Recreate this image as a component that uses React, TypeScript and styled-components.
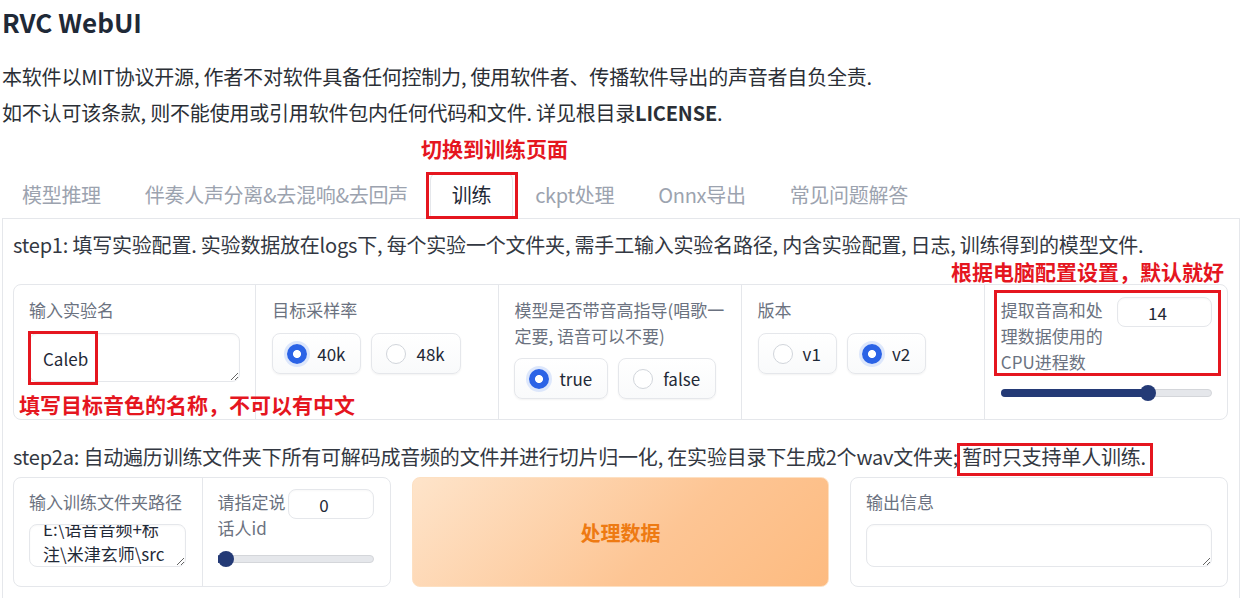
import React, { useLayoutEffect, useRef } from 'react';
import styled, { createGlobalStyle } from 'styled-components';

const RED = '#e5161f';
const BORDER = '#e5e7eb';
const NAVY = '#243a76';

const GlobalStyle = createGlobalStyle`
  html, body { margin: 0; padding: 0; background: #fff; }
  body {
    font-family: "Noto Sans CJK SC", "Noto Sans", sans-serif;
    color: #2b2f36;
    overflow: hidden;
  }
  * { box-sizing: border-box; }
`;

const Page = styled.div`
  width: 1241px;
  padding: 0 1px 0 2px;
`;

const Title = styled.h1`
  margin: 0;
  font-size: 26px;
  line-height: 44px;
  font-weight: 700;
  color: #1f2937;
`;

const Intro = styled.p`
  margin: 15px 0 0;
  font-size: 20px;
  line-height: 36px;
  letter-spacing: -0.2px;
  color: #2b2f36;
  b { font-weight: 700; }
`;

const Note = styled.div<{ $indent?: number; $right?: boolean }>`
  font-size: 21px;
  line-height: ${(p) => (p.$right ? 26 : 34)}px;
  font-weight: 700;
  color: ${RED};
  white-space: nowrap;
  padding-left: ${(p) => p.$indent ?? 0}px;
  padding-right: ${(p) => (p.$right ? 4 : 0)}px;
  text-align: ${(p) => (p.$right ? 'right' : 'left')};
`;

const TabBar = styled.div`
  display: flex;
  margin: 7px 0 0 -2px;
  height: 47px;
  position: relative;
  z-index: 1;
`;

const Tab = styled.div<{ $active?: boolean }>`
  position: relative;
  padding: 0 21px;
  font-size: 20px;
  line-height: 43px;
  letter-spacing: -0.3px;
  color: ${(p) => (p.$active ? '#1f2937' : '#9ca3af')};
  background: ${(p) => (p.$active ? '#fff' : 'transparent')};
  border: 1px solid ${(p) => (p.$active ? BORDER : 'transparent')};
  border-bottom-color: ${(p) => (p.$active ? '#fff' : 'transparent')};
  border-radius: 8px 8px 0 0;
  white-space: nowrap;
`;

const TabMark = styled.span`
  position: absolute;
  left: -5px;
  right: -6px;
  top: -1px;
  bottom: -1px;
  border: 3px solid ${RED};
  pointer-events: none;
`;

const Panel = styled.section`
  border: 1px solid ${BORDER};
  margin-top: -1px;
  padding: 13px 11px 30px 10px;
`;

const StepText = styled.div<{ $gap?: number }>`
  font-size: 20px;
  line-height: 26px;
  letter-spacing: -0.2px;
  color: #333842;
  margin-top: ${(p) => p.$gap ?? 0}px;
  white-space: nowrap;
`;

const Marked = styled.span`
  position: relative;
  display: inline-block;
  &::after {
    content: '';
    position: absolute;
    left: -5px;
    right: -7px;
    top: -1px;
    bottom: -6px;
    border: 3px solid ${RED};
  }
`;

const Block = styled.div<{ $w?: number }>`
  display: flex;
  border: 1px solid ${BORDER};
  border-radius: 8px;
  background: #fff;
  height: 100%;
  ${(p) => (p.$w ? `flex: 0 0 ${p.$w}px;` : 'flex: 1;')}
`;

const Row1 = styled.div`
  display: flex;
  height: 136px;
`;

const Row2 = styled.div`
  display: flex;
  gap: 21px;
  height: 110px;
  margin-top: 7px;
`;

const Cell = styled.div<{ $pt?: number; $pl?: number; $pr?: number }>`
  flex: 1;
  min-width: 0;
  position: relative;
  padding: ${(p) => p.$pt ?? 12}px ${(p) => p.$pr ?? 15}px 0 ${(p) => p.$pl ?? 15}px;
  & + & { border-left: 1px solid ${BORDER}; }
`;

const Label = styled.div`
  font-size: 17px;
  line-height: 26px;
  color: #6b7280;
`;

const TextBox = styled.textarea<{ $h: number; $mt?: number }>`
  display: block;
  width: 100%;
  height: ${(p) => p.$h}px;
  margin-top: ${(p) => p.$mt ?? 10}px;
  border: 1px solid ${BORDER};
  border-radius: 8px;
  padding: 12px 13px;
  font-family: inherit;
  font-size: 17px;
  line-height: 26px;
  color: #1f2937;
  background: #fff;
  resize: vertical;
  overflow: hidden;
  outline: none;
  box-shadow: inset 0 1px 2px rgba(0, 0, 0, 0.03);
`;

const PathBox = styled(TextBox)`
  padding: 6px 13px 0;
  line-height: 25px;
  white-space: pre-wrap;
`;

const RadioGroup = styled.div<{ $mt?: number }>`
  display: flex;
  gap: 10px;
  margin-top: ${(p) => p.$mt ?? 10}px;
`;

const RadioOption = styled.label`
  display: inline-flex;
  align-items: center;
  gap: 10px;
  height: 41px;
  padding: 0 15px 0 14px;
  border: 1px solid ${BORDER};
  border-radius: 8px;
  background: linear-gradient(#ffffff, #f9fafb);
  box-shadow: 0 1px 2px rgba(0, 0, 0, 0.05);
  font-size: 17px;
  color: #1f2937;
`;

const Dot = styled.span<{ $on?: boolean }>`
  width: 20px;
  height: 20px;
  border-radius: 50%;
  flex: 0 0 auto;
  ${(p) =>
    p.$on
      ? `background: radial-gradient(circle, #fff 0 3.6px, #2b63e6 4.4px);
         box-shadow: 0 0 0 3px #dde7fb;`
      : `background: #fff; border: 1px solid #d1d5db;`}
`;

const TopLine = styled.div<{ $gap?: number }>`
  display: flex;
  align-items: flex-start;
  gap: ${(p) => p.$gap ?? 8}px;
`;

const Grow = styled(Label)`
  flex: 1;
  min-width: 0;
`;

const NumberBox = styled.input<{ $w: number }>`
  flex: 0 0 ${(p) => p.$w}px;
  width: ${(p) => p.$w}px;
  height: 30px;
  border: 1px solid ${BORDER};
  border-radius: 8px;
  padding: 0 14px 0 0;
  text-align: center;
  font-family: inherit;
  font-size: 17px;
  color: #1f2937;
  background: #fff;
  outline: none;
  box-shadow: inset 0 1px 2px rgba(0, 0, 0, 0.03);
`;

const Track = styled.div`
  position: relative;
  height: 8px;
  margin-top: 14px;
  border-radius: 4px;
  background: #e5e7eb;
  border: 1px solid #d4d6da;
`;

const Fill = styled.div`
  position: absolute;
  left: -1px;
  top: -1px;
  bottom: -1px;
  border-radius: 4px;
  background: ${NAVY};
`;

const Thumb = styled.div`
  position: absolute;
  top: 50%;
  width: 16px;
  height: 16px;
  border-radius: 50%;
  background: ${NAVY};
  transform: translate(-50%, -50%);
`;

const FloatNote = styled(Note)`
  position: absolute;
  left: 5px;
  top: 106px;
  line-height: 26px;
  z-index: 2;
`;

const RedBox = styled.span<{ $l: number; $t: number; $w: number; $h: number }>`
  position: absolute;
  left: ${(p) => p.$l}px;
  top: ${(p) => p.$t}px;
  width: ${(p) => p.$w}px;
  height: ${(p) => p.$h}px;
  border: 3px solid ${RED};
  pointer-events: none;
  z-index: 2;
`;

const ActionButton = styled.button`
  flex: 0 0 417px;
  height: 100%;
  border: 1px solid #fde0c2;
  border-radius: 8px;
  background: linear-gradient(135deg, #fee4ca 0%, #fdc594 60%, #fdbb80 100%);
  color: #ee7a12;
  font-family: inherit;
  font-size: 20px;
  font-weight: 700;
  cursor: pointer;
`;

function Slider({ value, max }: { value: number; max: number }) {
  const pct = (value / max) * 100;
  return (
    <Track>
      <Fill style={{ width: `calc(${pct}% + 1px)` }} />
      <Thumb style={{ left: pct === 0 ? '7px' : `${pct}%` }} />
    </Track>
  );
}

function Radio({ label, on }: { label: string; on?: boolean }) {
  return (
    <RadioOption>
      <Dot $on={on} />
      {label}
    </RadioOption>
  );
}

const tabs = ['模型推理', '伴奏人声分离&去混响&去回声', '训练', 'ckpt处理', 'Onnx导出', '常见问题解答'];

export default function App() {
  const pathRef = useRef<HTMLTextAreaElement>(null);
  useLayoutEffect(() => {
    if (pathRef.current) pathRef.current.scrollTop = pathRef.current.scrollHeight;
  }, []);

  return (
    <Page>
      <GlobalStyle />
      <Title>RVC WebUI</Title>
      <Intro>
        本软件以MIT协议开源, 作者不对软件具备任何控制力, 使用软件者、传播软件导出的声音者自负全责.
        <br />
        如不认可该条款, 则不能使用或引用软件包内任何代码和文件. 详见根目录<b>LICENSE</b>.
      </Intro>
      <Note $indent={419}>切换到训练页面</Note>
      <TabBar>
        {tabs.map((t) => (
          <Tab key={t} $active={t === '训练'}>
            {t}
            {t === '训练' && <TabMark />}
          </Tab>
        ))}
      </TabBar>
      <Panel>
        <StepText>
          step1: 填写实验配置. 实验数据放在logs下, 每个实验一个文件夹, 需手工输入实验名路径, 内含实验配置, 日志, 训练得到的模型文件.
        </StepText>
        <Note $right>根据电脑配置设置，默认就好</Note>
        <Row1>
          <Block>
            <Cell>
              <Label>输入实验名</Label>
              <TextBox $h={49} defaultValue="Caleb" />
              <RedBox $l={14} $t={46} $w={70} $h={54} />
              <FloatNote>填写目标音色的名称，不可以有中文</FloatNote>
            </Cell>
            <Cell $pl={16}>
              <Label>目标采样率</Label>
              <RadioGroup>
                <Radio label="40k" on />
                <Radio label="48k" />
              </RadioGroup>
            </Cell>
            <Cell>
              <Label>模型是否带音高指导(唱歌一定要, 语音可以不要)</Label>
              <RadioGroup $mt={9}>
                <Radio label="true" on />
                <Radio label="false" />
              </RadioGroup>
            </Cell>
            <Cell $pl={16}>
              <Label>版本</Label>
              <RadioGroup>
                <Radio label="v1" />
                <Radio label="v2" on />
              </RadioGroup>
            </Cell>
            <Cell $pl={16} $pr={15}>
              <TopLine>
                <Grow>提取音高和处理数据使用的CPU进程数</Grow>
                <NumberBox $w={95} defaultValue="14" />
              </TopLine>
              <Slider value={14} max={20} />
              <RedBox $l={9} $t={5} $w={227} $h={86} />
            </Cell>
          </Block>
        </Row1>
        <StepText $gap={24}>
          step2a: 自动遍历训练文件夹下所有可解码成音频的文件并进行切片归一化, 在实验目录下生成2个wav文件夹;{' '}
          <Marked>暂时只支持单人训练.</Marked>
        </StepText>
        <Row2>
          <Block $w={378}>
            <Cell $pt={11} $pr={16}>
              <Label>输入训练文件夹路径</Label>
              <PathBox ref={pathRef} $h={43} $mt={9} defaultValue={'E:\\语音音频+标注\\米津玄师\\src'} />
            </Cell>
            <Cell $pt={11} $pl={15} $pr={16}>
              <TopLine $gap={0}>
                <Grow>请指定说话人id</Grow>
                <NumberBox $w={86} defaultValue="0" />
              </TopLine>
              <Slider value={0} max={4} />
            </Cell>
          </Block>
          <ActionButton>处理数据</ActionButton>
          <Block>
            <Cell $pt={11}>
              <Label>输出信息</Label>
              <TextBox $h={43} $mt={9} defaultValue="" />
            </Cell>
          </Block>
        </Row2>
      </Panel>
    </Page>
  );
}
